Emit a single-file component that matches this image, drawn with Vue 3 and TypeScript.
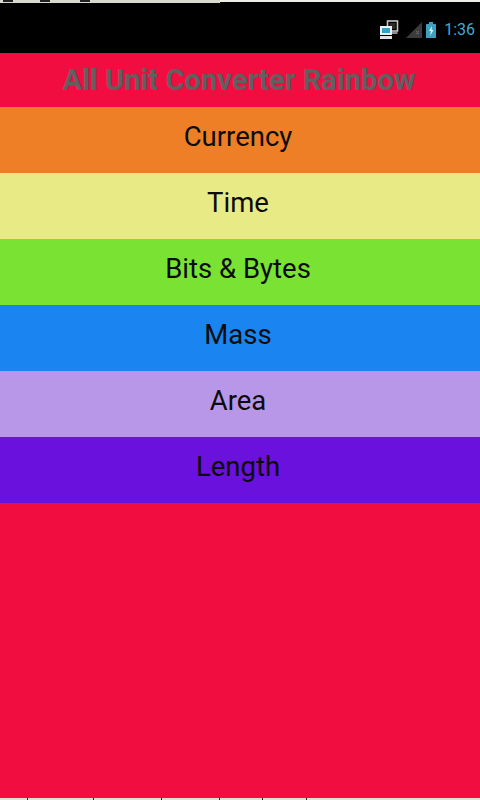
<script setup lang="ts">
const rows = [
  { label: 'Currency', color: '#ef7f26' },
  { label: 'Time', color: '#e8eb85' },
  { label: 'Bits & Bytes', color: '#7ae232' },
  { label: 'Mass', color: '#1a84f0' },
  { label: 'Area', color: '#b897e8' },
  { label: 'Length', color: '#6a11de' },
]
const topMarks = [3, 40, 80]
const bottomTicks = [27, 93, 161, 219, 262, 306]
</script>

<template>
  <div class="screen">
    <div class="edge top-edge">
      <div class="edge-left">
        <span v-for="m in topMarks" :key="m" class="mark" :style="{ left: m + 'px' }"></span>
      </div>
      <div class="edge-right"></div>
    </div>
    <div class="status">
      <svg class="ic-net" width="20" height="20" viewBox="0 0 20 20">
        <rect x="8.5" y="1" width="10" height="10" fill="none" stroke="#c4c4c4" stroke-width="1.6" />
        <rect x="10.5" y="3" width="6" height="6" fill="#2b2b2b" />
        <rect x="8.5" y="12" width="10" height="2" fill="#8a8a8a" />
        <rect x="1" y="6" width="12" height="9" fill="#e6f2f6" />
        <rect x="3" y="8" width="8" height="5" fill="#2fa3c9" />
        <rect x="1" y="16" width="12" height="3" fill="#e2e2e2" />
      </svg>
      <svg class="ic-signal" width="16" height="16" viewBox="0 0 16 16">
        <path d="M0 16 L16 0 V16 Z" fill="#3c3c3c" />
        <path d="M10 9 L13 12 M13 9 L10 12" stroke="#6a6a6a" stroke-width="1" />
      </svg>
      <svg class="ic-batt" width="10" height="16" viewBox="0 0 10 16">
        <rect x="3" y="0" width="4" height="2" fill="#3f9fbe" />
        <rect x="0" y="2" width="10" height="14" rx="0.5" fill="#3f9fbe" />
        <path d="M6 4 L3 9 H5 L4 14 L7.5 8 H5.5 Z" fill="#dff6fb" />
      </svg>
      <span class="clock">1:36</span>
    </div>
    <main class="content">
      <h1 class="title">All Unit Converter Rainbow</h1>
      <div v-for="r in rows" :key="r.label" class="row" :style="{ background: r.color }">{{ r.label }}</div>
    </main>
    <div class="edge bottom-edge">
      <span v-for="t in bottomTicks" :key="t" class="tick" :style="{ left: t + 'px' }"></span>
    </div>
  </div>
</template>

<style>
html, body { margin: 0; padding: 0; }
</style>

<style scoped>
.screen {
  width: 480px;
  height: 800px;
  display: flex;
  flex-direction: column;
  background: #000;
  overflow: hidden;
  font-family: Roboto, "Liberation Sans", sans-serif;
}
.edge { flex: none; position: relative; }
.top-edge { height: 4px; display: flex; background: #000; }
.edge-left { position: relative; width: 220px; height: 3px; background: #d8d8cf; }
.edge-right { flex: 1; height: 2px; background: #eeeee8; }
.mark { position: absolute; top: 0; width: 10px; height: 2px; background: #222; }
.status {
  flex: none;
  height: 49px;
  display: flex;
  align-items: center;
  justify-content: flex-end;
  padding: 2px 5px 0 0;
  box-sizing: border-box;
  background: #000;
}
.ic-net { margin-right: 7px; }
.ic-signal { margin-right: 4px; }
.ic-batt { margin-right: 8px; }
.clock { color: #41a9d2; font-size: 16px; }
.content {
  flex: 1;
  display: flex;
  flex-direction: column;
  background: #f20d40;
}
.title {
  margin: 0;
  height: 54px;
  line-height: 54px;
  padding-right: 2px;
  text-align: center;
  font-size: 29.2px;
  font-weight: 700;
  color: #606060;
}
.row {
  height: 66px;
  padding-bottom: 8px;
  box-sizing: border-box;
  display: flex;
  align-items: center;
  justify-content: center;
  font-size: 27.5px;
  color: #0c0c0c;
  padding-right: 4px;
}
.bottom-edge { height: 2px; background: #deded6; }
.tick { position: absolute; top: 0; width: 1px; height: 2px; background: #222; }
</style>
